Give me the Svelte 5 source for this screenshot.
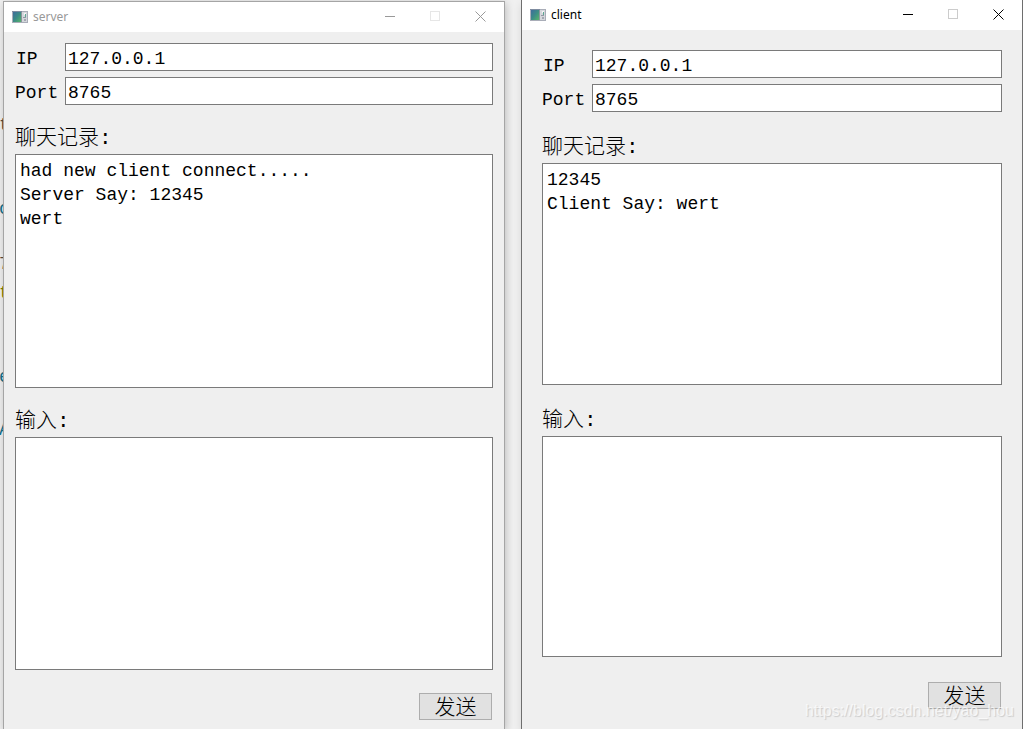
<script>
  let chats = $state([
    {
      name: "server",
      active: false,
      ip: "127.0.0.1",
      port: "8765",
      log: "had new client connect.....\nServer Say: 12345\nwert",
      draft: "",
    },
    {
      name: "client",
      active: true,
      ip: "127.0.0.1",
      port: "8765",
      log: "12345\nClient Say: wert",
      draft: "",
    },
  ]);

  // bits of the editor that stick out to the left of the server window
  const editorText = [
    { char: "t", top: 115, tone: "dark" },
    { char: "c", top: 199, tone: "blue" },
    { char: "7", top: 254, tone: "dark" },
    { char: "t", top: 283, tone: "olive" },
    { char: "e", top: 367, tone: "blue" },
    { char: "A", top: 420, tone: "blue" },
  ];

  const label = (name) => name[0].toUpperCase() + name.slice(1);

  const send = (chat) => {
    if (!chat.draft) return;
    chat.log += `\n${label(chat.name)} Say: ${chat.draft}`;
    chat.draft = "";
  };
</script>

<main class="desktop">
  <div class="editor" aria-hidden="true">
    {#each editorText as { char, top, tone }}
      <span class={tone} style="top: {top}px">{char}</span>
    {/each}
  </div>

  {#each chats as chat}
    <section class="window {chat.name}" class:active={chat.active}>
      <header class="titlebar">
        <svg class="app-icon" width="16" height="12" viewBox="0 0 16 12">
          <defs>
            <linearGradient id="screen-{chat.name}" x1="0" y1="0" x2="1" y2="1">
              <stop offset="0" stop-color="#3f6c9c" />
              <stop offset="0.5" stop-color="#3c8c86" />
              <stop offset="1" stop-color="#58b56a" />
            </linearGradient>
          </defs>
          <rect width="16" height="12" fill="#a9adb8" />
          <rect x="1" y="1" width="8" height="10" fill="url(#screen-{chat.name})" />
          <rect x="0" y="0" width="10" height="1" fill="#7f8ca0" />
          <rect x="9" y="1" width="1" height="10" fill="#8a969c" />
          <rect x="10" y="1" width="5" height="10" fill="#d5d7dc" />
          <rect x="12" y="2" width="2" height="2" fill="#f3f3f5" />
          <rect x="13" y="3" width="1" height="3" fill="#5ea793" />
          <rect x="11" y="6" width="3" height="1" fill="#9298a4" />
          <rect x="12" y="8" width="2" height="2" fill="#a4a8b2" />
        </svg>
        <h1>{chat.name}</h1>
        <button class="control" aria-label="Minimize">
          <svg width="11" height="11" viewBox="0 0 11 11">
            <path d="M0 5.5h10" />
          </svg>
        </button>
        <button class="control maximize" aria-label="Maximize" disabled>
          <svg width="11" height="11" viewBox="0 0 11 11">
            <path d="M.5 .5h9v9h-9z" />
          </svg>
        </button>
        <button class="control" aria-label="Close">
          <svg class="cross" width="11" height="11" viewBox="0 0 11 11">
            <path d="M.5 .5l10 10M10.5 .5l-10 10" />
          </svg>
        </button>
      </header>

      <form
        class="content"
        onsubmit={(event) => {
          event.preventDefault();
          send(chat);
        }}
      >
        <div class="fields">
          <label class="ip" for="{chat.name}-ip">IP</label>
          <input id="{chat.name}-ip" type="text" bind:value={chat.ip} />
          <label for="{chat.name}-port">Port</label>
          <input id="{chat.name}-port" type="text" bind:value={chat.port} />
        </div>

        <label class="caption" for="{chat.name}-log">聊天记录:</label>
        <textarea id="{chat.name}-log" readonly value={chat.log}></textarea>

        <label class="caption" for="{chat.name}-draft">输入:</label>
        <textarea id="{chat.name}-draft" bind:value={chat.draft}></textarea>

        <button class="send" type="submit">发送</button>
      </form>
    </section>
  {/each}

  <span class="watermark">https://blog.csdn.net/yao_hou</span>
</main>

<style>
  :global(body) {
    margin: 0;
    background: #f0f0f0;
  }

  .desktop {
    position: relative;
    display: grid;
    grid-template-columns: 1fr 1fr;
    gap: 16px;
    min-height: 100vh;
    padding-left: 3px;
    box-sizing: border-box;
    overflow: hidden;
    color: #000;
    font-family: "Liberation Mono", "Noto Sans CJK SC", monospace;
    font-size: 18px;
  }

  .editor {
    position: absolute;
    top: 0;
    left: 0;
    line-height: 20px;
  }

  .editor span {
    position: absolute;
    left: -1px;
  }

  .editor .dark {
    color: #5c4a3a;
  }

  .editor .blue {
    color: #12708c;
  }

  .editor .olive {
    color: #808000;
  }

  .window {
    --pad: 11px;
    --space: 20px;
    position: relative;
    display: flex;
    flex-direction: column;
    min-width: 0;
    margin-top: 1px;
    border: 1px solid #a5a5a5;
    border-bottom: 0;
    background: #efefef;
    box-shadow: 1px 2px 8px rgba(0, 0, 0, 0.22);
  }

  .window.active {
    --pad: 20px;
    --space: 22px;
    margin-top: 0;
    border-color: #6e6e6e;
    border-top: 0;
    box-shadow: 0 4px 8px rgba(0, 0, 0, 0.1);
  }

  .titlebar {
    display: flex;
    align-items: center;
    height: 30px;
    padding: 0 1px 0 8px;
    box-sizing: border-box;
    background: #fff;
    color: #999;
  }

  .active .titlebar {
    color: #000;
  }

  .app-icon {
    margin-right: 5px;
  }

  h1 {
    flex: 1;
    margin: 0;
    font: 12px/20px "Noto Sans", sans-serif;
  }

  .control {
    display: flex;
    align-items: center;
    justify-content: center;
    width: 45px;
    height: 30px;
    padding: 0 0 1px;
    border: 0;
    background: none;
    color: inherit;
  }

  .control path {
    fill: none;
    stroke: currentColor;
    stroke-width: 1;
    shape-rendering: crispEdges;
  }

  .control .cross path {
    shape-rendering: auto;
  }

  .maximize {
    color: #e6e6e6;
  }

  .active .maximize {
    color: #ccc;
  }

  .content {
    display: flex;
    flex: 1;
    flex-direction: column;
    padding: var(--pad);
  }

  .server .content {
    padding-bottom: 9px;
  }

  .fields {
    display: grid;
    grid-template-columns: 50px 1fr;
    row-gap: 6px;
    align-items: center;
  }

  .fields label {
    padding-top: 4px;
  }

  .ip {
    padding-left: 1px;
  }

  input,
  textarea {
    min-width: 0;
    box-sizing: border-box;
    border: 1px solid #7a7a7a;
    border-radius: 0;
    outline: 0;
    background: #fff;
    color: inherit;
    font: inherit;
  }

  input {
    height: 28px;
    padding: 4px 2px 0;
  }

  textarea {
    flex: 1;
    min-height: 100px;
    padding: 4px;
    line-height: 24px;
    resize: none;
  }

  .caption {
    margin: var(--space) 0 1px;
    font-size: 21px;
    font-weight: 300;
    line-height: 28px;
  }

  .send {
    align-self: flex-end;
    width: 73px;
    height: 27px;
    margin: calc(var(--space) + 3px) 1px 0 0;
    padding: 0 0 3px;
    border: 1px solid #adadad;
    background: #e1e1e1;
    color: inherit;
    font: 300 21px/22px "Noto Sans CJK SC", sans-serif;
  }

  .watermark {
    position: absolute;
    right: 9px;
    bottom: 8px;
    color: rgba(255, 255, 255, 0.7);
    font: 16px/20px "Liberation Sans", sans-serif;
    text-shadow: 1px 1px 1px rgba(0, 0, 0, 0.15);
    pointer-events: none;
  }
</style>
